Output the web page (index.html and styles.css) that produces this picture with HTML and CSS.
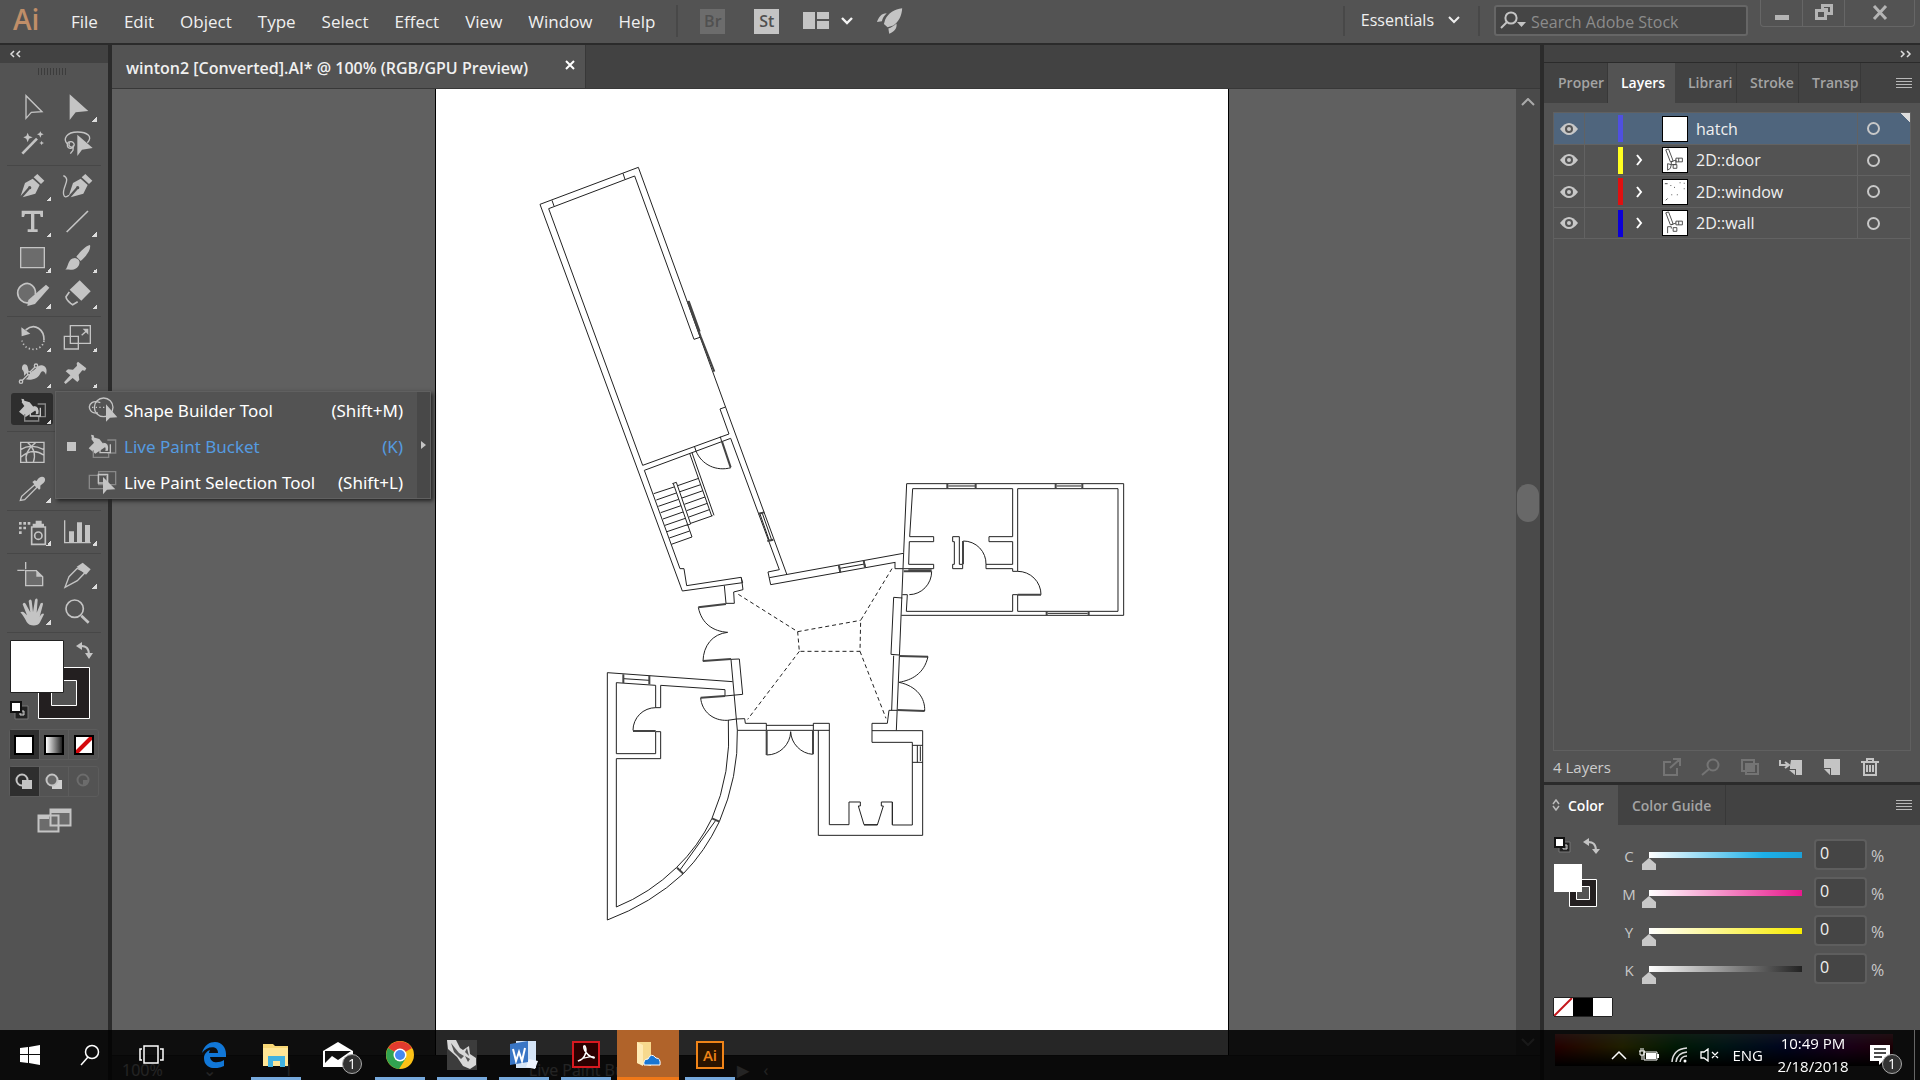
FILE: index.html
```html
<!DOCTYPE html>
<html lang="en">
<head>
<meta charset="utf-8">
<title>winton2 [Converted].AI</title>
<link rel="stylesheet" href="styles.css">
</head>
<body>
<div class="app">
  <header class="menubar">
    <span class="logo">Ai</span>
    <nav class="menus">
      <button>File</button><button>Edit</button><button>Object</button><button>Type</button><button>Select</button><button>Effect</button><button>View</button><button>Window</button><button>Help</button>
    </nav>
    <div class="quick">
      <button class="square off">Br</button>
      <button class="square">St</button>
      <button class="arrange" aria-label="Arrange documents"><svg width="50" height="18" viewBox="0 0 50 18"><path d="M0 0h12v17H0zM14 0h12v7H14zM14 9h12v8H14z" fill="#c4c4c4"/><path d="M39 6l5 5 5-5" fill="none" stroke="#f4f4f4" stroke-width="2.4"/></svg></button>
      <button aria-label="GPU performance"><svg width="26" height="26" viewBox="0 0 64 76" preserveAspectRatio="none"><path d="M62 1C43 3 28 15 20 34l-3 13 9 9 14-5C54 41 61 22 62 1zM24 15C10 16 4 26 0 41l12-2C14 29 17 23 24 15zM48 45C41 53 35 56 28 60l2 15C42 69 50 60 48 45z" fill="#c4c4c4"/></svg></button>
    </div>
    <div class="workspace">
      <button class="essentials">Essentials <svg width="12" height="8" viewBox="0 0 12 8"><path d="M1 1l5 5 5-5" fill="none" stroke="#eee" stroke-width="2"/></svg></button>
    </div>
    <label class="search">
      <svg width="27" height="20" viewBox="0 0 27 20"><circle cx="11" cy="7" r="5.6"/><path d="M7 11l-6 6"/><path class="solid" d="M17 11h9l-4.500 5z"/></svg>
      <input type="text" placeholder="Search Adobe Stock" aria-label="Search Adobe Stock">
    </label>
    <div class="winctl">
      <button aria-label="Minimize"><svg width="18" height="18"><path d="M2 11h14v5H2z" fill="#b4b4b4"/></svg></button>
      <button aria-label="Restore"><svg width="18" height="18"><path d="M7.500 1.500h9v8h-5v-4h-4zM1.500 6.500h9v8h-9z" fill="none" stroke="#b4b4b4" stroke-width="3"/></svg></button>
      <button aria-label="Close"><svg width="18" height="18"><path d="M3 2l12 13M15 2L3 15" stroke="#b4b4b4" stroke-width="3"/></svg></button>
    </div>
  </header>

  <div class="work">
    <aside class="tools">
      <button class="collapse" aria-label="Collapse tools"><svg width="13" height="8" viewBox="0 0 13 8"><path d="M5 1L2 4l3 3M11 1L8 4l3 3" fill="none" stroke="#ddd" stroke-width="1.500"/></svg></button>
      <div class="grip"></div>
      <div class="group">
        <button aria-label="Selection"><svg viewBox="27 150 138 108"><path class="o" d="M78 167v68l16-18 32-2z"/></svg></button>
        <button class="more" aria-label="Direct selection"><svg viewBox="165 150 138 108"><path d="M209 163v77l18-23 38-4z"/></svg></button>
        <button aria-label="Magic wand"><svg viewBox="27 258 138 108"><path class="o w8" d="M67 341l44-45"/><path d="M83 278l4 10 11 4-11 4-4 11-4-11-9-4 9-4zM121 274l3 6 7 3-7 3-3 7-3-7-7-3 7-3zM125 302l2 5 5 2-5 2-2 5-2-5-5-2 5-2z"/></svg></button>
        <button aria-label="Lasso"><svg viewBox="165 258 138 108"><path class="o" d="M262 308c18-18-1-32-29-32-34 0-45 21-31 36m8-5a8 8 0 1 0 12 10c5-12-20-19-20-3 0 13 16 15 18 3l-1 14-8 10"/><path d="M232 284v64l14-19 32-5z"/></svg></button>
      </div>
      <div class="group">
        <button class="more" aria-label="Pen"><svg viewBox="27 387 138 108"><path d="M112 402l21 20-10 10-22-20zM98 416l21 19-13 26-38 11 21-24a5 5 0 1 0-5-5l-22 25 13-39z"/></svg></button>
        <button aria-label="Curvature"><svg viewBox="165 387 138 108"><path d="M256 402l21 20-10 10-22-20zM242 416l21 19-13 26-38 11 21-24a5 5 0 1 0-5-5l-22 25 13-39z"/><path class="o" d="M190 407c25 10-5 35 1 57q3 12 16 2"/></svg></button>
        <button class="more" aria-label="Type"><svg viewBox="27 495 138 108"><path d="M65 512h64v19h-7l-2-9h-17v46h10v8H83v-8h10v-46H75l-3 9h-7z"/></svg></button>
        <button class="more" aria-label="Line segment"><svg viewBox="165 495 138 108"><path class="o w5" d="M200 576l64-63"/></svg></button>
        <button class="more" aria-label="Rectangle"><svg viewBox="27 603 138 108"><path class="o tint" d="M62 623h71v60H62z"/></svg></button>
        <button class="more" aria-label="Paintbrush"><svg viewBox="165 603 138 108"><path d="M270 615c4 15-13 35-28 48l-13-13c12-15 28-33 41-35zM225 654c17 3 17 19 6 29-11 9-23 5-35 6 10-8 6-34 29-35z"/></svg></button>
        <button class="more" aria-label="Shaper"><svg viewBox="27 711 138 108"><path class="o tint w5" d="M85 788c-15 3-32-12-32-29 0-24 29-37 44-22 11 10 10 21 9 27"/><path d="M138 734l10 9-43 49-23 6 3-18z"/></svg></button>
        <button class="more" aria-label="Eraser"><svg viewBox="165 711 138 108"><path d="M239 721l33 33-28 28-35-33z"/><path class="o w5" d="M208 756l-10 14q0 8 14 20l6 4 15-9"/></svg></button>
      </div>
      <div class="group">
        <button class="more" aria-label="Rotate"><svg viewBox="27 840 138 108"><path class="o w5" d="M77 870c28-24 56 0 55 31"/><path class="o w5 dots" d="M132 902c-5 34-57 35-66 0"/><path d="M64 862l1 27 26-8z"/></svg></button>
        <button class="more" aria-label="Scale"><svg viewBox="165 840 138 108"><path class="o" d="M211 857h60v53h-60zM193 889h42v38h-42zM245 886l15-14"/><path d="M248 866h17v18z"/></svg></button>
        <button class="more" aria-label="Width"><svg viewBox="27 -42 138 108"><path d="M66-2C64-18 78-22 83-10L86 4 72 18C73 10 72 4 66-2zM96 4C110-2 112-16 126-14 140-10 142 0 138 14 134 4 128 0 122 8 116 24 98 32 76 28 86 24 84 16 96 4z"/><path class="o" d="M66 32L86 12M90 6L105-9"/><circle class="o" cx="63" cy="35" r="5"/><circle class="o" cx="108" cy="-13" r="5"/><circle class="o" cx="87" cy="10" r="5"/></svg></button>
        <button class="more" aria-label="Puppet warp"><svg viewBox="165 -42 138 108"><path d="M234-25l25 20-4 7-8-1-11 13 2 15-6 7-14-12-21 18-5-5 19-21-14-12 7-6 15 1 12-12-1-7z"/></svg></button>
        <div class="flyhost">
          <button class="more active" aria-label="Live paint bucket"><svg viewBox="27 66 138 108"><path d="M68 91l21 6 19 23-31 21-20-16 16-17-8-11zM64 86l8 2 3 16-7-3zM101 108q18 0 14 24l-8 1q4-14-8-14z"/><path class="o dim" d="M74 132v21h42v-13M113 102h23v38h-23"/><path class="o" d="M91 122v16h30v-25"/></svg></button>
          <div class="flyout">
            <ul>
              <li><button><span class="mark"></span><svg viewBox="0 0 90 78"><circle class="o" cx="47" cy="31" r="28"/><path class="o" d="M30 48C5 51-3 27 12 17q9-6 25 0"/><path class="o dots" d="M12 31h40"/><path d="M54 22v52l12-12 22-1z"/></svg><span>Shape Builder Tool</span><kbd>(Shift+M)</kbd></button></li>
              <li><button class="current"><span class="mark on"></span><svg viewBox="0 0 90 78"><path d="M13 12l21 6 19 23-31 21L2 46l16-17-8-11zM9 5l8 2 3 16-7-3zM46 29q18 0 14 24l-8 1q4-14-8-14z"/><path class="o dim" d="M16 52v21h46V61M58 21h25v39H58"/><path class="o" d="M36 43v16h31V34"/></svg><span>Live Paint Bucket</span><kbd>(K)</kbd></button></li>
              <li><button><span class="mark"></span><svg viewBox="0 0 90 78"><path class="o dim" d="M4 19h52v40H4zM32 8h51v39H32z"/><path class="o" d="M31 16h28v26H31z"/><path d="M45 24v52l12-14 25-1z"/></svg><span>Live Paint Selection Tool</span><kbd>(Shift+L)</kbd></button></li>
            </ul>
            <button class="tear" aria-label="Tear off"><svg viewBox="0 0 5 8"><path d="M0 0l5 4-5 4z"/></svg></button>
          </div>
        </div>
      </div>
      <div class="group">
        <button aria-label="Mesh"><svg viewBox="27 195 138 108"><path class="o" d="M62 217h70v60H62zM62 239q30-20 70 0M62 262q35-32 70-6M82 217q30 25 18 60M108 217q-38 30-28 60"/></svg></button>
        <span></span>
        <button class="more" aria-label="Eyedropper"><svg viewBox="27 303 138 108"><path class="o" d="M104 344l-39 35-4 12 13-2 37-37z"/><path d="M97 336l7-5 6 2c10-20 28-13 25-2 0 6-9 12-14 16v9l-4 3z"/></svg></button>
      </div>
      <div class="group">
        <button class="more" aria-label="Symbol sprayer"><svg viewBox="27 432 138 108"><path class="o w5" d="M95 471h41v52H95z"/><circle class="o w5" cx="115" cy="497" r="11"/><path d="M107 452h18v9h7v10H98v-10h9zM57 456h8v8h-8zM70 456h8v8h-8zM83 456h8v8h-8zM57 470h8v8h-8zM70 470h8v8h-8zM57 484h8v8h-8z"/></svg></button>
        <button class="more" aria-label="Column graph"><svg viewBox="165 432 138 108"><path d="M192 451h4v65h76v4h-80zM207 484h15v34h-15zM231 457h15v61h-15zM255 465h15v53h-15z"/></svg></button>
      </div>
      <div class="group">
        <button aria-label="Artboard"><svg viewBox="27 561 138 108"><path class="o tint" d="M77 602h32l19 18v27H77zM52 601h22M77 576v22"/><path d="M109 601l20 19h-20z"/></svg></button>
        <button class="more" aria-label="Slice"><svg viewBox="165 561 138 108"><path class="o" d="M232 595l-25 25-12 32 37-20 24-25z"/><path d="M248 578l24 20-14 16-28-24z"/></svg></button>
        <button class="more" aria-label="Hand"><svg viewBox="27 669 138 108"><path d="M80 756c-7-14-13-22-19-29 7-6 15 2 20 9l-13-33q3-9 9-2l14 26-5-34q4-9 9-1l4 34 6-37q6-7 8 1l-3 38 12-28q7-4 7 3l-10 37c5-8 11-12 13-7l-12 24c-6 13-32 13-40-1z"/></svg></button>
        <button aria-label="Zoom"><svg viewBox="165 669 138 108"><circle class="o w5" cx="224" cy="716" r="26"/><path class="o w8" d="M244 737l22 21"/></svg></button>
      </div>
      <div class="paint">
        <svg width="88" height="84" viewBox="0 0 88 84">
          <path d="M28.500 27.500h51v51h-51z" fill="#231f20" stroke="#fff"/><path d="M41.500 40.500h25v25h-25z" fill="#535353" stroke="#fff"/>
          <path d="M.5.5h53v52H.5z" fill="#fff" stroke="#222"/>
          <path d="M70 6q9-1 9 9" fill="none" stroke="#c4c4c4" stroke-width="2"/><path d="M66 6l6-4v8zM75 13h8l-4 6z" fill="#c4c4c4"/>
          <path d="M5 66h13v13H5z" fill="#222" stroke="#777"/><path d="M10 71h4v4h-4z" fill="#555" stroke="#ccc"/><path d="M1 62h10v10H1z" fill="#fff" stroke="#111" stroke-width="2"/>
        </svg>
      </div>
      <div class="trio">
        <button class="on" aria-label="Color"><svg width="20" height="20"><path d="M1 1h18v18H1z" fill="#fff" stroke="#000" stroke-width="2"/></svg></button>
        <button aria-label="Gradient"><span class="gradient"></span></button>
        <button aria-label="None"><svg width="20" height="20"><path d="M1 1h18v18H1z" fill="#fff"/><path d="M2 18L18 2" stroke="#d4080c" stroke-width="4"/><path d="M1 1h18v18H1z" fill="none" stroke="#000" stroke-width="2"/></svg></button>
      </div>
      <div class="trio modes">
        <button class="on" aria-label="Draw normal"><svg width="18" height="18"><circle cx="7" cy="7" r="5.500" fill="none" stroke="#c4c4c4" stroke-width="2"/><path d="M7 7h10v9H7z" fill="#c4c4c4"/></svg></button>
        <button aria-label="Draw behind"><svg width="18" height="18"><path d="M7 7h10v9H7z" fill="#d0d0d0"/><circle cx="7" cy="7" r="5.500" fill="#686868" stroke="#c4c4c4" stroke-width="2"/></svg></button>
        <button aria-label="Draw inside"><svg width="18" height="18"><circle cx="8" cy="7" r="5.500" fill="none" stroke="#6c6c6c" stroke-width="2"/><path d="M8 7h5q0 5-5 5z" fill="#6c6c6c"/></svg></button>
      </div>
      <button class="screen" aria-label="Change screen mode"><svg width="36" height="26"><path d="M1.500 7.500h20v16h-20zM13.500 1.500h20v16h-20z" fill="#6c6c6c" stroke="#c4c4c4" stroke-width="2"/><path d="M1 7h11v4H1zM13 1h21v4H13z" fill="#c4c4c4"/></svg></button>
    </aside>

    <main class="document">
      <div class="tabs"><div class="tab"><span>winton2 [Converted].AI* @ 100% (RGB/GPU Preview)</span><button aria-label="Close document"><svg width="10" height="10"><path d="M1 1l8 8M9 1L1 9" stroke="#fff" stroke-width="2"/></svg></button></div></div>
      <div class="stage">
        <div class="canvas">
          <svg class="artboard" viewBox="436 89 792 966" preserveAspectRatio="xMidYMin slice" role="img" aria-label="Floor plan">
            <g transform="translate(520 150) scale(.33333)">
              <path d="M60 163L355 52L617 772L800 1272M60 163L487 1323L668 1298L663 1282L500 1307L492 1256H480L373 961L632 865L778 1259L744 1266L752 1304L1126 1237M748 1283L1150 1210M543 561L522 568L344 78L86 176L368 946L627 852L600 777L617 771M96 151L102 168M309 70L315 88"/>
              <path class="b" d="M503 453L542 560L583 665M506 453L539 545"/>
              <path d="M523 888L528 903C545 945 590 965 633 953M601 860L605 875"/><path class="b" d="M606 875L632 952"/>
              <path d="M509 910L575 1098M516 908L582 1096M578 1097L512 1120M457 1001L469 997L512 1122L500 1126M460 1001L516 1161L454 1183"/>
              <path d="M401 1031L462 1011M409 1050L469 1029M415 1069L476 1048M422 1088L483 1067M429 1107L489 1086M435 1126L496 1105M441 1145L503 1124M448 1164L509 1143M473 1007L536 985M480 1025L542 1004M486 1044L549 1022M493 1063L555 1041M500 1082L562 1060M507 1101L568 1079"/>
              <path d="M720 1092L748 1172M727 1090L755 1170M956 1246L960 1268M1031 1231L1037 1253M960 1255L1034 1242"/><path class="b" d="M715 1091L733 1087M742 1173L760 1169M957 1246L961 1268M1031 1231L1035 1253"/>
            </g>
            <g transform="translate(860 470) scale(.33333)">
              <path d="M131 248L140 41H791V436H124M131 248L109 781M473 304V56H774V424H473V374H458V424H139L142 374H127M158 56H458V200H387V215H458V283H378V296H458V304H473M158 56L149 200H221V215H148L146 283H221V296H131M105 277V296H131M278 200H298V283H308V296H278V283H283V215H278ZM310 213A68 68 0 0 1 378 283M215 304A68 70 0 0 1 148 374M473 304A70 70 0 0 1 543 374M265 48H345M590 48H664M563 430H683"/>
              <path class="b" d="M309 213V283M145 301H215M131 304H215M473 374H543M262 41V56M347 41V56M587 41V56M667 41V56M560 424V436M686 424V436M117 558L204 560M112 720L194 723"/>
              <path d="M127 384L101 382L93 553L117 555M204 560C192 612 155 630 117 637C170 648 196 684 194 723M101 557L95 721M112 721H87L82 760H36V817H157V1065H97V996H64V1008H70L52 1065H12M36 782H188V1096M157 826H188M157 877H188M172 826V877M181 829V873"/>
            </g>
            <g transform="translate(590 570) scale(.33333)">
              <path class="dash" d="M445 73L623 185L628 244H810L812 151L907 -6M623 185L812 151M628 244L473 448M810 244L888 445"/>
              <path d="M403 47L408 100H433L431 66L459 59L454 22M325 112C335 162 370 184 413 187C367 192 340 227 339 274M423 268L448 267L458 373L405 378V359L212 346V413H197V346L79 338V551H197V485H212V566H79V1011M423 268L442 481M428 335L52 308V1050M100 326L178 331M129 481A68 68 0 0 1 197 413M332 383C335 425 370 453 412 451L440 447M440 447L464 446L466 460H529V481H442M529 466H670M529 481H670M777 696V764H718V460H670V481H718M777 696H811V708H805L822 764H862M907 764V696M685 481V796H998M530 555A72 72 0 0 0 602 485A72 72 0 0 0 668 553"/>
              <path d="M442 481Q446 620 388 755Q345 845 280 911Q185 1000 52 1050M415 450Q425 610 366 745Q325 830 259 893Q180 970 79 1011M378 750L270 900"/>
              <path class="b" d="M325 112L408 102M339 273L423 267M332 383L405 378M129 483H197M530 481V555M669 481V553M100 313V339M178 317V343M366 745L388 755M261 893L280 911"/>
            </g>
          </svg>
          <div class="scroll"><svg width="14" height="8"><path d="M1 7l6-6 6 6" fill="none" stroke="#aaa" stroke-width="2"/></svg><i></i><svg width="14" height="8"><path d="M1 1l6 6 6-6" fill="none" stroke="#aaa" stroke-width="2"/></svg></div>
        </div>
        <footer class="status"><span>100%</span><span class="caret">⌄</span><span class="page">1</span><span class="current-tool">Live Paint Bucket</span><span class="play">▶</span><span class="prev">‹</span></footer>
      </div>
    </main>

    <aside class="panels">
      <div class="expand"><button aria-label="Collapse panels"><svg width="13" height="8" viewBox="0 0 13 8"><path d="M2 1l3 3-3 3M8 1l3 3-3 3" fill="none" stroke="#ddd" stroke-width="1.500"/></svg></button></div>
      <div class="ptabs"><button class="t-prop" aria-label="Properties">Proper</button><button class="t-layers on">Layers</button><button aria-label="Libraries">Librari</button><button>Stroke</button><button aria-label="Transparency">Transp</button><button class="burger" aria-label="Panel menu"><svg width="16" height="12"><path d="M0 1.500h16M0 4.500h16M0 7.500h16M0 10.500h16" stroke="#b8b8b8"/></svg></button></div>
      <section class="layers">
        <ul>
          <li class="sel"><button class="eye" aria-label="Toggle hatch"><svg viewBox="0 0 18 12"><path d="M0 6Q9-6 18 6Q9 18 0 6z"/><circle cx="9" cy="6" r="4"/><circle class="p" cx="9" cy="6" r="2"/></svg></button><i class="c-violet"></i><span class="arrow"></span><svg class="thumb" viewBox="0 0 26 26"></svg><span class="name">hatch</span><button class="target" aria-label="Target hatch"></button></li>
          <li><button class="eye" aria-label="Toggle 2D::door"><svg viewBox="0 0 18 12"><path d="M0 6Q9-6 18 6Q9 18 0 6z"/><circle cx="9" cy="6" r="4"/><circle class="p" cx="9" cy="6" r="2"/></svg></button><i class="c-yellow"></i><span class="arrow"><svg width="7" height="12"><path d="M1 1l4 5-4 5"/></svg></span><svg class="thumb" viewBox="0 0 26 26"><path d="M3 2l3-1 5 13-3 1zM14 11h7v4h-7zM17 11v4M9 15l5-2v5H9zM5 17l4 1q0 5-4 6zM11 18h4v4h-4z"/></svg><span class="name">2D::door</span><button class="target" aria-label="Target 2D::door"></button></li>
          <li><button class="eye" aria-label="Toggle 2D::window"><svg viewBox="0 0 18 12"><path d="M0 6Q9-6 18 6Q9 18 0 6z"/><circle cx="9" cy="6" r="4"/><circle class="p" cx="9" cy="6" r="2"/></svg></button><i class="c-red"></i><span class="arrow"><svg width="7" height="12"><path d="M1 1l4 5-4 5"/></svg></span><svg class="thumb" viewBox="0 0 26 26"><path d="M2 4h3M8 6h1M12 8h1M18 3h1M23 3v1M23 9v1M9 16h1M15 16h1M3 22l2-2"/></svg><span class="name">2D::window</span><button class="target" aria-label="Target 2D::window"></button></li>
          <li><button class="eye" aria-label="Toggle 2D::wall"><svg viewBox="0 0 18 12"><path d="M0 6Q9-6 18 6Q9 18 0 6z"/><circle cx="9" cy="6" r="4"/><circle class="p" cx="9" cy="6" r="2"/></svg></button><i class="c-blue"></i><span class="arrow"><svg width="7" height="12"><path d="M1 1l4 5-4 5"/></svg></span><svg class="thumb" viewBox="0 0 26 26"><path d="M3 2l3-1 5 13-3 1zM14 11h7v4h-7zM17 11v4M9 15l5-2M5 24v-7h4v2M11 18h4v4h-4z"/></svg><span class="name">2D::wall</span><button class="target" aria-label="Target 2D::wall"></button></li>
        </ul>
        <footer>
          <span>4 Layers</span>
          <button class="off" aria-label="Export"><svg width="18" height="18"><path d="M8 4H1v13h13v-7M7 10l10-9M10 1h7v7"/></svg></button>
          <button class="off" aria-label="Locate object"><svg width="20" height="18"><circle cx="12" cy="7" r="5.500"/><path d="M8 11l-7 6"/></svg></button>
          <button class="off" aria-label="Clipping mask"><svg width="18" height="18"><path d="M1 2h12v11H1zM5 6h12v10H5z"/><path class="f" d="M5 6h8v7H5z"/></svg></button>
          <button aria-label="New sublayer"><svg width="24" height="18"><path d="M1 2v5h8M6 4l4 3-4 3"/><path class="f" d="M12 2h11v15h-6v-6h-6V8z"/><path class="f" d="M10 12h6v5z"/></svg></button>
          <button aria-label="New layer"><svg width="18" height="18"><path class="f" d="M1 1h16v16H8v-7H1zM1 11h6v6z"/></svg></button>
          <button aria-label="Delete layer"><svg width="18" height="18"><path d="M0 4h18M6 4V1h6v3M3 4v13h12V4M6 7v7M9 7v7M12 7v7"/></svg></button>
        </footer>
      </section>
      <div class="ptabs low"><button class="on"><svg width="8" height="12"><path d="M1 5l3-4 3 4M1 7l3 4 3-4" fill="none" stroke="#bbb" stroke-width="1.500"/></svg>Color</button><button class="guide">Color Guide</button><button class="burger" aria-label="Color panel menu"><svg width="16" height="12"><path d="M0 1.500h16M0 4.500h16M0 7.500h16M0 10.500h16" stroke="#b8b8b8"/></svg></button></div>
      <section class="color">
        <div class="mix">
          <svg class="proxy" width="48" height="72" viewBox="0 0 48 72">
            <path d="M6 6h11v10H6z" fill="#222" stroke="#777"/><path d="M10 9h4v4h-4z" fill="#555" stroke="#ccc"/><path d="M2 2h9v9H2z" fill="#fff" stroke="#111" stroke-width="2"/>
            <path d="M34 6q9-1 9 9" fill="none" stroke="#c4c4c4" stroke-width="2"/><path d="M30 6l6-4v8zM39 13h8l-4 5z" fill="#c4c4c4"/>
            <path d="M16.500 43.500h27v27h-27z" fill="#231f20" stroke="#fff"/><path d="M23.500 50.500h13v13h-13z" fill="#535353" stroke="#fff"/><path d="M1 28h28v28H1z" fill="#fff"/>
          </svg>
          <div class="sliders">
            <div class="row"><label for="c">C</label><input id="c" class="cy" type="range" value="0"><input type="text" value="0" aria-label="Cyan percent"><span>%</span></div>
            <div class="row"><label for="m">M</label><input id="m" class="ma" type="range" value="0"><input type="text" value="0" aria-label="Magenta percent"><span>%</span></div>
            <div class="row"><label for="y">Y</label><input id="y" class="ye" type="range" value="0"><input type="text" value="0" aria-label="Yellow percent"><span>%</span></div>
            <div class="row"><label for="k">K</label><input id="k" class="bl" type="range" value="0"><input type="text" value="0" aria-label="Black percent"><span>%</span></div>
          </div>
        </div>
        <svg class="swatches" width="60" height="20"><path d="M0 0h60v20H0z" fill="#fff"/><path d="M20 0h20v20H20z"/><path d="M1 19L19 1" stroke="#c4161c" stroke-width="2"/><path d="M.5.5h59v19H.5z" fill="none" stroke="#222"/></svg>
        <div class="ramp"></div>
      </section>
    </aside>
  </div>
</div>

<div class="taskbar">
  <button class="start" aria-label="Start"><svg width="20" height="20"><path d="M0 3l8-1v7H0zM9 2l11-2v9H9zM0 10h8v8l-8-1zM9 10h11v10L9 18z" fill="#fff"/></svg></button>
  <button aria-label="Search"><svg width="20" height="22"><circle cx="12" cy="8" r="6.500" fill="none" stroke="#fff" stroke-width="1.500"/><path d="M8 13l-7 8" stroke="#fff" stroke-width="1.500"/></svg></button>
  <button aria-label="Task view"><svg width="26" height="20"><path d="M5 1h14v17H5zM3 4H1v11h2M21 4h3v11h-3" fill="none" stroke="#fff" stroke-width="1.500"/></svg></button>
  <button aria-label="Edge"><svg width="26" height="26" viewBox="0 0 26 26"><path d="M1 11C3 3 9 0 14 0c7 0 11 6 11 12v3H9c1 7 9 6 14 3v6C15 28 3 27 3 16c0-4 3-7 6-8q-1 2-1 3h9c0-8-11-7-16 0z" fill="#1177d7"/></svg></button>
  <button class="run" aria-label="File Explorer"><svg width="28" height="24"><path d="M1 1h10l2 2h13v20H1z" fill="#f8d775"/><path d="M1 5h25v18H1z" fill="#ffe696"/><path d="M6 13h17v11h-5v-6h-7v6H6z" fill="#41b2e0"/></svg></button>
  <button aria-label="Mail"><svg width="30" height="26"><path d="M0 9l15-9 15 9v16H0z" fill="#fff"/><path d="M2 9h26L15 18 9 14l-7 7z" fill="#111"/></svg><b class="badge">1</b></button>
  <button class="run" aria-label="Chrome"><svg width="28" height="28" viewBox="0 0 28 28"><circle cx="14" cy="14" r="14" fill="#fbc116"/><path d="M14 14L2 7a14 14 0 0 1 24 0z" fill="#e33b2e"/><path d="M14 14L2 7a14 14 0 0 0 11 21l7-11z" fill="#31a350"/><circle cx="14" cy="14" r="6.500" fill="#fff"/><circle cx="14" cy="14" r="5" fill="#4688f1"/></svg></button>
  <button class="run" aria-label="Rhinoceros"><svg width="30" height="30" viewBox="0 0 30 30"><path d="M0 0h30v30H0z" fill="#3c3c3c"/><path d="M0 0h9l4 8 3 2 6-4 1 8 6 4v7l-6 4-7-3-6-9L1 9z" fill="#d8d8d8"/><path d="M4 3l8 10 5 3-3 3-7-7zM18 16l5 3-2 3zM20 8l2 8-4-4z" fill="#555"/></svg></button>
  <button class="run" aria-label="Word"><svg width="30" height="28"><path d="M7 0h20v27H7z" fill="#d5e5f7"/><path d="M1 3l18-3v21L1 24z" fill="#3976c5"/><path d="M4 8l3 12 3-9 3 9 3-13" fill="none" stroke="#fff" stroke-width="2"/><path d="M20 18l9 2-3 8-9-2z" fill="#eef5ff"/></svg></button>
  <button class="run" aria-label="Acrobat"><svg width="28" height="28"><path d="M1 1h26v25H1z" fill="#2b0000" stroke="#d71920" stroke-width="2"/><path d="M6 20c8-2 9-11 7-15-3-2-1 9 9 12 2-2-9-2-16 3z" fill="none" stroke="#fff" stroke-width="1.500"/></svg></button>
  <button class="hot" aria-label="OneDrive folder"><svg width="26" height="26"><path d="M2 1h14v24l-10-2-4-1z" fill="#f7d98d"/><path d="M2 1l6 3v21l-6-3z" fill="#ffebb5"/><path d="M9 24q-1-6 4-6 3-7 8-1 5 0 4 7z" fill="#1976d2" stroke="#fff"/></svg></button>
  <button class="run" aria-label="Illustrator"><span class="aibox">Ai</span></button>
  <div class="tray">
    <svg width="16" height="10"><path d="M1 9l7-7 7 7" fill="none" stroke="#fff" stroke-width="1.500"/></svg>
    <svg width="20" height="16"><path d="M5 5h13v8H5zM0 4h6M1 4v4h4V4M2 1v3M4 1v3M3 8v5" fill="none" stroke="#fff"/><path d="M7 6h10v6H7zM18 7h2v4h-2z" fill="#fff"/></svg>
    <svg width="17" height="16"><path d="M1 15Q2 2 16 1M5 15Q6 6 16 5M9 15Q10 9 16 9" fill="none" stroke="#ddd" stroke-width="1.500"/><circle cx="14" cy="14" r="1.500" fill="#fff"/></svg>
    <svg width="20" height="14"><path d="M1 4h3l4-3v12l-4-3H1zM12 4l6 6M18 4l-6 6" fill="none" stroke="#fff" stroke-width="1.300"/></svg>
    <span class="lang">ENG</span>
    <time>10:49 PM<br>2/18/2018</time>
    <button class="note" aria-label="Notifications"><svg width="20" height="20"><path d="M0 0h20v16h-7l-4 4v-4H0z" fill="#fff"/><path d="M4 4h12M4 8h12M4 12h8" stroke="#111" stroke-width="1.500"/></svg><b class="badge">1</b></button>
  </div>
</div>
</body>
</html>
```
FILE: styles.css
```css
* { box-sizing: border-box; }
body { margin: 0; font-family: "Open Sans", "Noto Sans", sans-serif; font-size: 16px; color: #f0f0f0; background: #535353; }
button { font: inherit; color: inherit; background: none; border: 0; padding: 0; margin: 0; display: flex; align-items: center; justify-content: center; }
ul { list-style: none; margin: 0; padding: 0; }
svg { display: block; flex: none; }

.app { height: 100vh; display: flex; flex-direction: column; overflow: hidden; }

/* Menu bar */
.menubar { height: 45px; flex: none; display: flex; align-items: flex-start; border-bottom: 2px solid #2b2b2b; padding-right: 5px; }
.logo { width: 58px; padding-left: 13px; font: 600 28px/38px "Open Sans", sans-serif; color: #c08e68; }
.menus { display: flex; height: 43px; font-size: 17px; }
.menus button { padding: 0 13px; }
.quick { display: flex; align-items: center; height: 32px; margin: 5px 0 0 8px; padding-left: 22px; border-left: 2px solid #484848; }
.square { width: 25px; height: 25px; margin-right: 29px; background: #c4c4c4; color: #505050; font-weight: 600; }
.square.off { background: #6c6c6c; color: #505050; }
.quick .square + .arrange { margin-left: -5px; margin-right: 24px; }
.workspace { margin: 6px 14px 0 auto; height: 30px; border: solid #484848; border-width: 0 2px; padding: 0 18px 0 16px; }
.essentials { gap: 14px; height: 28px; }
.search { width: 254px; height: 31px; margin: 5px 12px 0 0; border: 2px solid #666; border-radius: 3px; background: #454545; display: flex; align-items: center; gap: 4px; padding-left: 4px; }
.search svg { fill: none; stroke: #c4c4c4; stroke-width: 2; }
.search .solid { fill: #c4c4c4; stroke: none; }
.search input { flex: 1; min-width: 0; background: none; border: 0; padding: 2px 0 0; color: #ddd; font: inherit; outline: 0; }
.search input::placeholder { color: #8c8c8c; opacity: 1; }
.winctl { display: flex; border: 1px solid #666; border-top: 0; border-radius: 0 0 4px 4px; height: 27px; }
.winctl button { width: 42px; border-right: 1px solid #666; }
.winctl button:last-child { width: 69px; border: 0; }

.work { flex: 1; display: flex; min-height: 0; }

/* Tools */
.tools { width: 112px; flex: none; border-right: 4px solid #2b2b2b; }
.collapse { width: 100%; height: 18px; background: #424242; justify-content: flex-start; padding-left: 9px; }
.grip { width: 30px; height: 7px; margin: 5px auto 15px 38px; background: repeating-linear-gradient(90deg, #3c3c3c 0 1px, #535353 1px 3px); }
.group { display: grid; grid-template-columns: 46px 46px; grid-auto-rows: 36px; margin: 0 7px 3px; padding: 0 0 3px 2px; border-bottom: 1px solid #474747; }
.group button { position: relative; }
.group svg { width: 46px; height: 36px; fill: #c4c4c4; }
.tools .o { fill: none; stroke: #c4c4c4; stroke-width: 4; }
.tools .w5 { stroke-width: 5; }
.tools .w8 { stroke-width: 8; }
.tools .dim { stroke: #888; }
.tools .tint { fill: #6c6c6c; }
.tools .dots { stroke-dasharray: 4 7; }
.more::after { content: ""; position: absolute; right: 4px; bottom: 4px; width: 5px; height: 5px; background: linear-gradient(135deg, transparent 50%, #ddd 50%); }
.flyhost { position: relative; width: 46px; height: 36px; }
.active { width: 46px; height: 36px; }
.active::before { content: ""; position: absolute; inset: 1px 2px 3px; background: #2e2e2e; border-radius: 3px; }
.active svg { position: relative; }

.flyout { position: absolute; z-index: 5; left: 46px; top: -1px; width: 376px; height: 108px; display: flex; background: #535353; border: 1px solid #606060; box-shadow: 2px 2px 4px #222; font-family: "Noto Sans", sans-serif; font-size: 17px; color: #fff; }
.flyout ul { flex: 1; }
.flyout li button { width: 100%; height: 36px; padding: 0 14px 0 11px; justify-content: flex-start; }
.flyout .current { color: #559be0; }
.flyout li svg { width: 30px; height: 26px; margin: 0 6px 0 12px; }
.flyout kbd { font: inherit; margin-left: auto; }
.mark { width: 9px; height: 9px; }
.mark.on { background: #c4c4c4; }
.flyout .tear { width: 13px; background: #484848; }
.flyout .tear svg { width: 5px; height: 8px; }

.paint { margin: 7px 0 0 10px; }
.trio { display: flex; width: 90px; height: 31px; margin: 5px 0 6px 9px; border: 1px solid #5c5c5c; border-radius: 3px; }
.trio.modes { margin: 0 0 11px 9px; }
.trio button { flex: 1; border-right: 1px solid #5c5c5c; }
.trio button:last-child { border: 0; }
.trio .on { background: #2e2e2e; }
.gradient { width: 20px; height: 20px; border: 2px solid #000; background: linear-gradient(90deg, #fff, #222); }
.screen { margin-left: 37px; }

/* Document */
.document { flex: 1; display: flex; flex-direction: column; min-width: 0; }
.tabs { height: 44px; flex: none; background: #424242; border-bottom: 1px solid #383838; }
.tab { width: 474px; height: 43px; background: #535353; display: flex; align-items: center; justify-content: space-between; padding: 3px 10px 0 14px; border-right: 1px solid #383838; font-size: 16px; font-weight: 600; }
.tab button { padding-bottom: 6px; }
.stage { flex: 1; display: flex; flex-direction: column; min-height: 0; }
.canvas { flex: 1; display: flex; justify-content: center; background: #606060; padding-left: 12px; min-height: 0; position: relative; }
.artboard { width: 794px; height: 100%; background: #fff; border: solid #000; border-width: 0 1px; fill: none; }
.artboard path { stroke: #222; stroke-width: 1; vector-effect: non-scaling-stroke; }
.artboard .b { stroke: #444; stroke-width: 2; }
.artboard .dash { stroke-dasharray: 4 3; }
.scroll { position: absolute; right: 0; top: 0; bottom: 0; width: 24px; background: #4a4a4a; display: flex; flex-direction: column; align-items: center; justify-content: space-between; padding: 9px 0; }
.scroll i { width: 22px; height: 38px; border-radius: 11px; background: #686868; margin-bottom: 138px; }
.status { height: 25px; flex: none; display: flex; align-items: center; gap: 40px; padding: 4px 0 0 10px; background: #484848; border-top: 1px solid #333; }
.page { margin-left: 28px; }
.current-tool { margin-left: 196px; }
.play { margin-left: 42px; }
.prev { margin-left: -26px; }

/* Panels */
.panels { width: 380px; flex: none; border-left: 4px solid #2b2b2b; display: flex; flex-direction: column; }
.expand { height: 18px; background: #424242; display: flex; justify-content: flex-end; padding-right: 8px; border-bottom: 1px solid #2b2b2b; }
.ptabs { height: 40px; flex: none; background: #424242; display: flex; font-size: 14px; font-weight: 600; color: #a4a4a4; }
.ptabs button { width: 62px; justify-content: flex-start; padding: 0 0 1px 13px; border-right: 1px solid #383838; }
.ptabs .t-prop { width: 64px; padding-left: 14px; }
.ptabs .t-layers { width: 67px; }
.ptabs .on { background: #535353; color: #fff; border: 0; }
.ptabs .burger { margin-left: auto; width: 24px; padding: 0; border: 0; }
.layers { height: 682px; flex: none; padding: 9px 9px 0; display: flex; flex-direction: column; border-bottom: 3px solid #2b2b2b; }
.layers ul { flex: 1; border: 1px solid #606060; }
.layers li { height: 32px; display: flex; align-items: center; border-bottom: 1px solid #626262; }
.layers li:nth-child(even) { height: 31px; }
.layers .sel { background: linear-gradient(225deg, #ddd 7px, #4f657d 7px); }
.eye { width: 31px; align-self: stretch; border-right: 1px solid #626262; }
.eye svg { width: 18px; height: 12px; fill: #c8c8c8; }
.eye circle { fill: #555; }
.eye .p { fill: #c8c8c8; }
.layers i { width: 5px; height: 27px; margin-left: 33px; }
.c-violet { background: #4f50e0; }
.c-yellow { background: #ffff20; }
.c-red { background: #e01010; }
.c-blue { background: #0c00d8; }
.arrow { width: 39px; padding-left: 13px; }
.arrow path { fill: none; stroke: #fff; stroke-width: 2; }
.thumb { width: 26px; height: 26px; border: 1px solid #000; background: #fff; fill: none; stroke: #444; }
.name { flex: 1; align-self: stretch; display: flex; align-items: center; padding-left: 8px; border-right: 1px solid #626262; }
.layers li .target { width: 13px; height: 13px; border: 2px solid #c8c8c8; border-radius: 50%; margin: 0 30px 0 9px; }
.layers footer { height: 31px; flex: none; display: flex; align-items: center; font-size: 15px; padding-right: 32px; }
.layers footer span { margin-right: auto; color: #ccc; }
.layers footer button { margin-left: 20px; }
.layers footer svg { fill: none; stroke: #c4c4c4; stroke-width: 2; }
.layers footer .f { fill: #c4c4c4; stroke: none; }
.layers footer .off svg { stroke: #747474; }
.layers footer .off .f { fill: #747474; }
.ptabs.low button { width: auto; padding: 0 14px; }
.ptabs.low .on { padding: 0 14px 0 8px; gap: 8px; }
.ptabs.low .burger { width: 24px; padding: 0; }
.color { padding: 11px 9px 0; }
.mix { display: flex; }
.proxy { margin-right: 20px; }
.sliders { flex: 1; padding-right: 25px; }
.row { display: flex; align-items: center; height: 38px; margin-top: -1px; color: #c8c8c8; }
.row + .row { margin-top: 0; }
.row label { width: 16px; padding-top: 4px; text-align: center; font-size: 15px; }
.row span { width: 19px; padding: 4px 0 0 4px; }
.row input[type=text] { width: 53px; height: 31px; border: 2px solid #5e5e5e; border-radius: 4px; background: #454545; color: #f0f0f0; font: inherit; padding: 0 0 2px 4px; }
.row input[type=range] { appearance: none; flex: 1; margin: 14px 12px 0 5px; height: 18px; padding: 0; background-color: transparent; background-repeat: no-repeat; background-size: calc(100% - 7px) 6px; background-position: 7px 0; min-width: 0; }
.row input[type=range]::-webkit-slider-thumb { appearance: none; width: 14px; height: 12px; margin-top: 6px; border: 0; border-radius: 0; background: #c8c8c8; clip-path: polygon(50% 0, 100% 50%, 100% 100%, 0 100%, 0 50%); }
.cy { background-image: linear-gradient(90deg, #fff, #1cb0e8 75%, #1ca0d8); }
.ma { background-image: linear-gradient(90deg, #fff, #e8188c); }
.ye { background-image: linear-gradient(90deg, #fff, #f8ec00); }
.bl { background-image: linear-gradient(90deg, #fff, #222); }
.swatches { margin-top: 10px; }
.ramp { height: 32px; margin: 17px 18px 0 2px; background: linear-gradient(#fff6, transparent 40%, #000), linear-gradient(90deg, #e00, #cc0 20%, #0a2 36%, #088 50%, #02c 68%, #a0a 85%, #b02); }

/* Taskbar */
.taskbar { position: fixed; z-index: 9; left: 0; right: 0; bottom: 0; height: 50px; background: rgba(0,0,0,.85); display: flex; color: #fff; }
.taskbar > button { width: 62px; position: relative; }
.taskbar > .start { width: 59px; }
.run::after { content: ""; position: absolute; left: 6px; right: 6px; bottom: 0; height: 3px; background: #76a9dc; }
.hot { background: #b0632a; border-bottom: 3px solid #f07818; }
.badge { position: absolute; left: 35px; top: 24px; width: 20px; height: 20px; border: 1px solid #aaa; border-radius: 50%; background: #333; font: 14px/18px "Open Sans", sans-serif; text-align: center; }
.aibox { width: 28px; height: 28px; border: 2px solid #f08418; background: #2b1400; color: #f08418; font-size: 15px; line-height: 24px; font-weight: 600; text-align: center; }
.tray { margin-left: auto; display: flex; align-items: center; gap: 12px; padding-right: 5px; }
.lang { font-size: 15px; }
time { font-size: 15px; line-height: 23px; text-align: center; width: 76px; }
.note { position: relative; width: 52px; height: 50px; padding-right: 18px; border-right: 1px solid #666; }
.note .badge { left: 19px; }
```
